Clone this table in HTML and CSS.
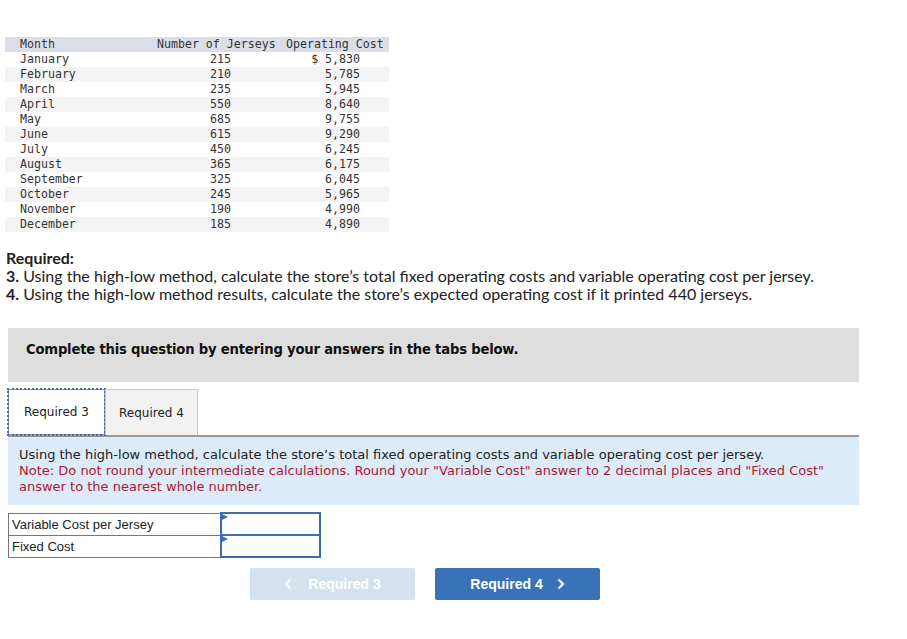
FILE: index.html
```html
<!DOCTYPE html>
<html>
<head>
<meta charset="utf-8">
<link rel="stylesheet" href="styles.css">
</head>
<body>
<div class="page">
  <table class="data">
    <thead>
      <tr><th class="c-month">Month</th><th class="c-num">Number of Jerseys</th><th class="c-cost">Operating Cost</th></tr>
    </thead>
    <tbody>
      <tr><td class="c-month">January</td><td class="c-num">215</td><td class="c-cost">$ 5,830</td></tr>
      <tr><td class="c-month">February</td><td class="c-num">210</td><td class="c-cost">5,785</td></tr>
      <tr><td class="c-month">March</td><td class="c-num">235</td><td class="c-cost">5,945</td></tr>
      <tr><td class="c-month">April</td><td class="c-num">550</td><td class="c-cost">8,640</td></tr>
      <tr><td class="c-month">May</td><td class="c-num">685</td><td class="c-cost">9,755</td></tr>
      <tr><td class="c-month">June</td><td class="c-num">615</td><td class="c-cost">9,290</td></tr>
      <tr><td class="c-month">July</td><td class="c-num">450</td><td class="c-cost">6,245</td></tr>
      <tr><td class="c-month">August</td><td class="c-num">365</td><td class="c-cost">6,175</td></tr>
      <tr><td class="c-month">September</td><td class="c-num">325</td><td class="c-cost">6,045</td></tr>
      <tr><td class="c-month">October</td><td class="c-num">245</td><td class="c-cost">5,965</td></tr>
      <tr><td class="c-month">November</td><td class="c-num">190</td><td class="c-cost">4,990</td></tr>
      <tr><td class="c-month">December</td><td class="c-num">185</td><td class="c-cost">4,890</td></tr>
    </tbody>
  </table>

  <div class="required">
    <div class="req-title">Required:</div>
    <div><b>3.</b> Using the high-low method, calculate the store’s total fixed operating costs and variable operating cost per jersey.</div>
    <div><b>4.</b> Using the high-low method results, calculate the store’s expected operating cost if it printed 440 jerseys.</div>
  </div>

  <div class="banner">Complete this question by entering your answers in the tabs below.</div>

  <div class="tabs">
    <div class="tab active">Required 3</div>
    <div class="tab">Required 4</div>
  </div>

  <div class="panel">
    <div>Using the high-low method, calculate the store’s total fixed operating costs and variable operating cost per jersey.</div>
    <div class="note">Note: Do not round your intermediate calculations. Round your "Variable Cost" answer to 2 decimal places and "Fixed Cost" answer to the nearest whole number.</div>
  </div>

  <table class="answers">
    <tr><td class="lbl">Variable Cost per Jersey</td><td class="inp"><span class="flag"></span></td></tr>
    <tr><td class="lbl">Fixed Cost</td><td class="inp"><span class="flag"></span></td></tr>
  </table>

  <div class="nav">
    <div class="btn prev"><svg class="chev" width="8" height="12" viewBox="0 0 8 12"><path d="M6.5 1.5 L2 6 L6.5 10.5" fill="none" stroke="#fff" stroke-width="2.2"/></svg>Required 3</div>
    <div class="btn next">Required 4<svg class="chev" width="8" height="12" viewBox="0 0 8 12"><path d="M1.5 1.5 L6 6 L1.5 10.5" fill="none" stroke="#fff" stroke-width="2.2"/></svg></div>
  </div>
</div>
</body>
</html>
```

FILE: styles.css
```css
* { box-sizing: border-box; }
body {
  margin: 0;
  background: #fff;
  font-family: "Liberation Sans", Arial, sans-serif;
  color: #222;
}
.page {
  padding: 37px 0 0 0;
}
.data {
  margin-left: 5px;
  width: 384px;
  table-layout: fixed;
  border-collapse: collapse;
  font-family: "DejaVu Sans Mono", monospace;
  font-size: 11.6px;
  color: #333;
}
.data th, .data td {
  height: 15px;
  padding: 0;
  font-weight: normal;
  line-height: 15px;
  white-space: nowrap;
  overflow: visible;
}
.data thead tr { background: #dbdee7; }
.data tbody tr:nth-child(even) { background: #f4f4f4; }
.data .c-month { text-align: left; padding-left: 15px; width: 152px; }
.data th.c-num { text-align: left; width: 129px; }
.data td.c-num { text-align: right; padding-right: 55px; }
.data th.c-cost { text-align: left; }
.data td.c-cost { text-align: right; padding-right: 29px; }

.required {
  margin: 17px 0 0 6px;
  font-family: "Lato", "Liberation Sans", sans-serif;
  font-size: 16px;
  line-height: 18px;
  color: #222;
}
.req-title { font-weight: bold; }

.banner {
  margin: 25px 48px 0 8px;
  height: 54px;
  background: #dedede;
  padding: 14px 0 0 18px;
  font-family: "DejaVu Sans", Verdana, sans-serif;
  font-weight: bold;
  font-size: 13.2px;
  color: #111;
  letter-spacing: -0.2px;
}

.tabs {
  margin: 7px 48px 0 8px;
  display: flex;
  border-bottom: 2px solid #999;
  height: 48px;
}
.tab {
  display: flex;
  align-items: center;
  font-family: "DejaVu Sans", Verdana, sans-serif;
  font-size: 12px;
  color: #222;
  padding: 0 13px;
  height: 46px;
  background: #f2f2f2;
  border: 1px solid #c8c8c8;
  border-bottom: none;
}
.tab.active {
  background: #fff;
  width: 97px;
  border: 1px solid #999;
  outline: 2px dotted #3a6fb5;
  outline-offset: -1px;
  padding-left: 15px;
}

.panel {
  margin: 0 48px 0 8px;
  background: #dbebf9;
  padding: 10px 10px 10px 11px;
  font-family: "DejaVu Sans", Verdana, sans-serif;
  font-size: 13px;
  line-height: 16px;
  color: #222;
  height: 68px;
}
.note { color: #b0172f; }

.answers {
  margin: 7px 0 0 8px;
  border-collapse: collapse;
  font-family: "Liberation Sans", Arial, sans-serif;
  font-size: 13px;
  color: #222;
}
.answers td {
  height: 22px;
  border: 1px solid #777;
  padding: 0;
}
.answers .lbl { width: 212px; padding-left: 3px; }
.answers .inp {
  width: 99px;
  border: 2px solid #3b6eb0;
  position: relative;
  background: #fff;
}
.flag {
  position: absolute;
  left: 0;
  top: 0;
  width: 0;
  height: 0;
  border-top: 3px solid transparent;
  border-bottom: 3px solid transparent;
  border-left: 6px solid #3b6eb0;
}

.nav {
  margin: 10px 0 0 250px;
  display: flex;
  gap: 20px;
}
.btn {
  width: 165px;
  height: 32px;
  border-radius: 2px;
  display: flex;
  align-items: center;
  justify-content: center;
  color: #fff;
  font-family: "Liberation Sans", Arial, sans-serif;
  font-weight: bold;
  font-size: 14px;
}
.btn.prev { background: #d6e1ef; }
.btn.next { background: #3873b8; }
.prev .chev { margin-right: 16px; }
.next .chev { margin-left: 14px; }
```
